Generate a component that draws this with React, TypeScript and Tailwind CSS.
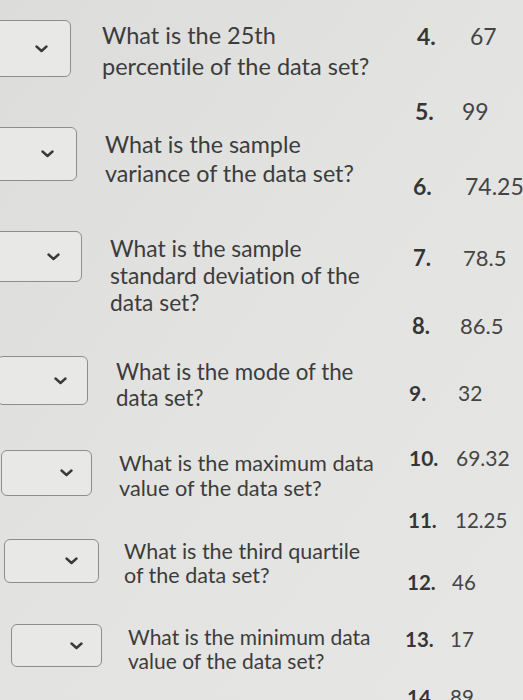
import React from "react";

type Question = {
  lines: string[];
  rowClass: string;
  boxClass: string;
  textClass: string;
};

type Answer = {
  num: string;
  value: string;
  rowClass: string;
  numClass: string;
};

const questions: Question[] = [
  {
    lines: ["What is the 25th", "percentile of the data set?"],
    rowClass: "h-[107px]",
    boxClass: "ml-[-20px] w-[91px] h-[57px] pr-[22px]",
    textClass: "ml-[31px] mt-0 text-[23.5px] leading-[31px]",
  },
  {
    lines: ["What is the sample", "variance of the data set?"],
    rowClass: "h-[104px]",
    boxClass: "ml-[-14px] w-[91px] h-[54px] pr-[22px]",
    textClass: "ml-[28px] mt-[3px] text-[23.3px] leading-[29px]",
  },
  {
    lines: ["What is the sample", "standard deviation of the", "data set?"],
    rowClass: "h-[125px]",
    boxClass: "ml-[-9px] w-[91px] h-[51px] pr-[21px]",
    textClass: "ml-[28px] mt-[4px] text-[22.8px] leading-[27px]",
  },
  {
    lines: ["What is the mode of the", "data set?"],
    rowClass: "h-[94px]",
    boxClass: "ml-[-3px] w-[91px] h-[49px] pr-[20px]",
    textClass: "ml-[28px] mt-[3px] text-[22.3px] leading-[25.5px]",
  },
  {
    lines: ["What is the maximum data", "value of the data set?"],
    rowClass: "h-[89px]",
    boxClass: "ml-[1px] w-[91px] h-[46px] pr-[18px]",
    textClass: "ml-[27px] mt-[1px] text-[21.7px] leading-[25px]",
  },
  {
    lines: ["What is the third quartile", "of the data set?"],
    rowClass: "h-[85px]",
    boxClass: "ml-[4px] w-[95px] h-[44px] pr-[20px]",
    textClass: "ml-[25px] mt-0 text-[21.5px] leading-[24px]",
  },
  {
    lines: ["What is the minimum data", "value of the data set?"],
    rowClass: "h-[76px]",
    boxClass: "ml-[11px] w-[91px] h-[43px] pr-[18px]",
    textClass: "ml-[26px] mt-[1px] text-[21px] leading-[24px]",
  },
];

const answers: Answer[] = [
  { num: "4.", value: "67", rowClass: "h-[75px] ml-[17px] text-[23px]", numClass: "w-[53px]" },
  { num: "5.", value: "99", rowClass: "h-[75px] ml-[15px] text-[23px]", numClass: "w-[47px]" },
  { num: "6.", value: "74.25", rowClass: "h-[72px] ml-[13px] text-[23px]", numClass: "w-[52px]" },
  { num: "7.", value: "78.5", rowClass: "h-[68px] ml-[13px] text-[22px]", numClass: "w-[50px]" },
  { num: "8.", value: "86.5", rowClass: "h-[67px] ml-[12px] text-[22px]", numClass: "w-[48px]" },
  { num: "9.", value: "32", rowClass: "h-[65px] ml-[9px] text-[21px]", numClass: "w-[49px]" },
  { num: "10.", value: "69.32", rowClass: "h-[62px] ml-[9px] text-[21px]", numClass: "w-[47px]" },
  { num: "11.", value: "12.25", rowClass: "h-[62px] ml-[8px] text-[20.5px]", numClass: "w-[47px]" },
  { num: "12.", value: "46", rowClass: "h-[57px] ml-[7px] text-[20.5px]", numClass: "w-[45px]" },
  { num: "13.", value: "17", rowClass: "h-[58px] ml-[5px] text-[20.5px]", numClass: "w-[45px]" },
  { num: "14.", value: "89", rowClass: "h-[58px] ml-[7px] text-[20.5px]", numClass: "w-[43px]" },
];

function Chevron() {
  return (
    <svg width="13" height="8" viewBox="0 0 13 8" fill="none">
      <polyline
        points="1.5,1.5 6.5,6 11.5,1.5"
        stroke="#3a3a3a"
        strokeWidth="2.4"
        strokeLinecap="round"
        strokeLinejoin="round"
      />
    </svg>
  );
}

export default function App() {
  return (
    <div className="w-[523px] h-[700px] overflow-hidden flex bg-linear-to-br from-[#dcdddb] via-[#e3e4e2] to-[#e6e7e5] font-[Lato,sans-serif] text-[#3c3c3c] [font-variant-ligatures:none]">
      {/* questions with dropdowns */}
      <div className="w-[400px] shrink-0 pt-[20px] flex flex-col">
        {questions.map((q, i) => (
          <div key={i} className={`flex items-start shrink-0 ${q.rowClass}`}>
            <div
              className={`shrink-0 flex items-center justify-end rounded-[6px] border-[1.5px] border-[#8c8d8c] bg-[#e8e9e7] ${q.boxClass}`}
            >
              <Chevron />
            </div>
            <div className={`whitespace-nowrap ${q.textClass}`}>
              {q.lines.map((line, j) => (
                <div key={j}>{line}</div>
              ))}
            </div>
          </div>
        ))}
      </div>

      {/* answer choices */}
      <div className="flex-1 pt-[22px] flex flex-col leading-[28px]">
        {answers.map((a) => (
          <div key={a.num} className={`flex shrink-0 whitespace-nowrap ${a.rowClass}`}>
            <span className={`font-bold text-[#353535] ${a.numClass}`}>{a.num}</span>
            <span className="text-[#444]">{a.value}</span>
          </div>
        ))}
      </div>
    </div>
  );
}
